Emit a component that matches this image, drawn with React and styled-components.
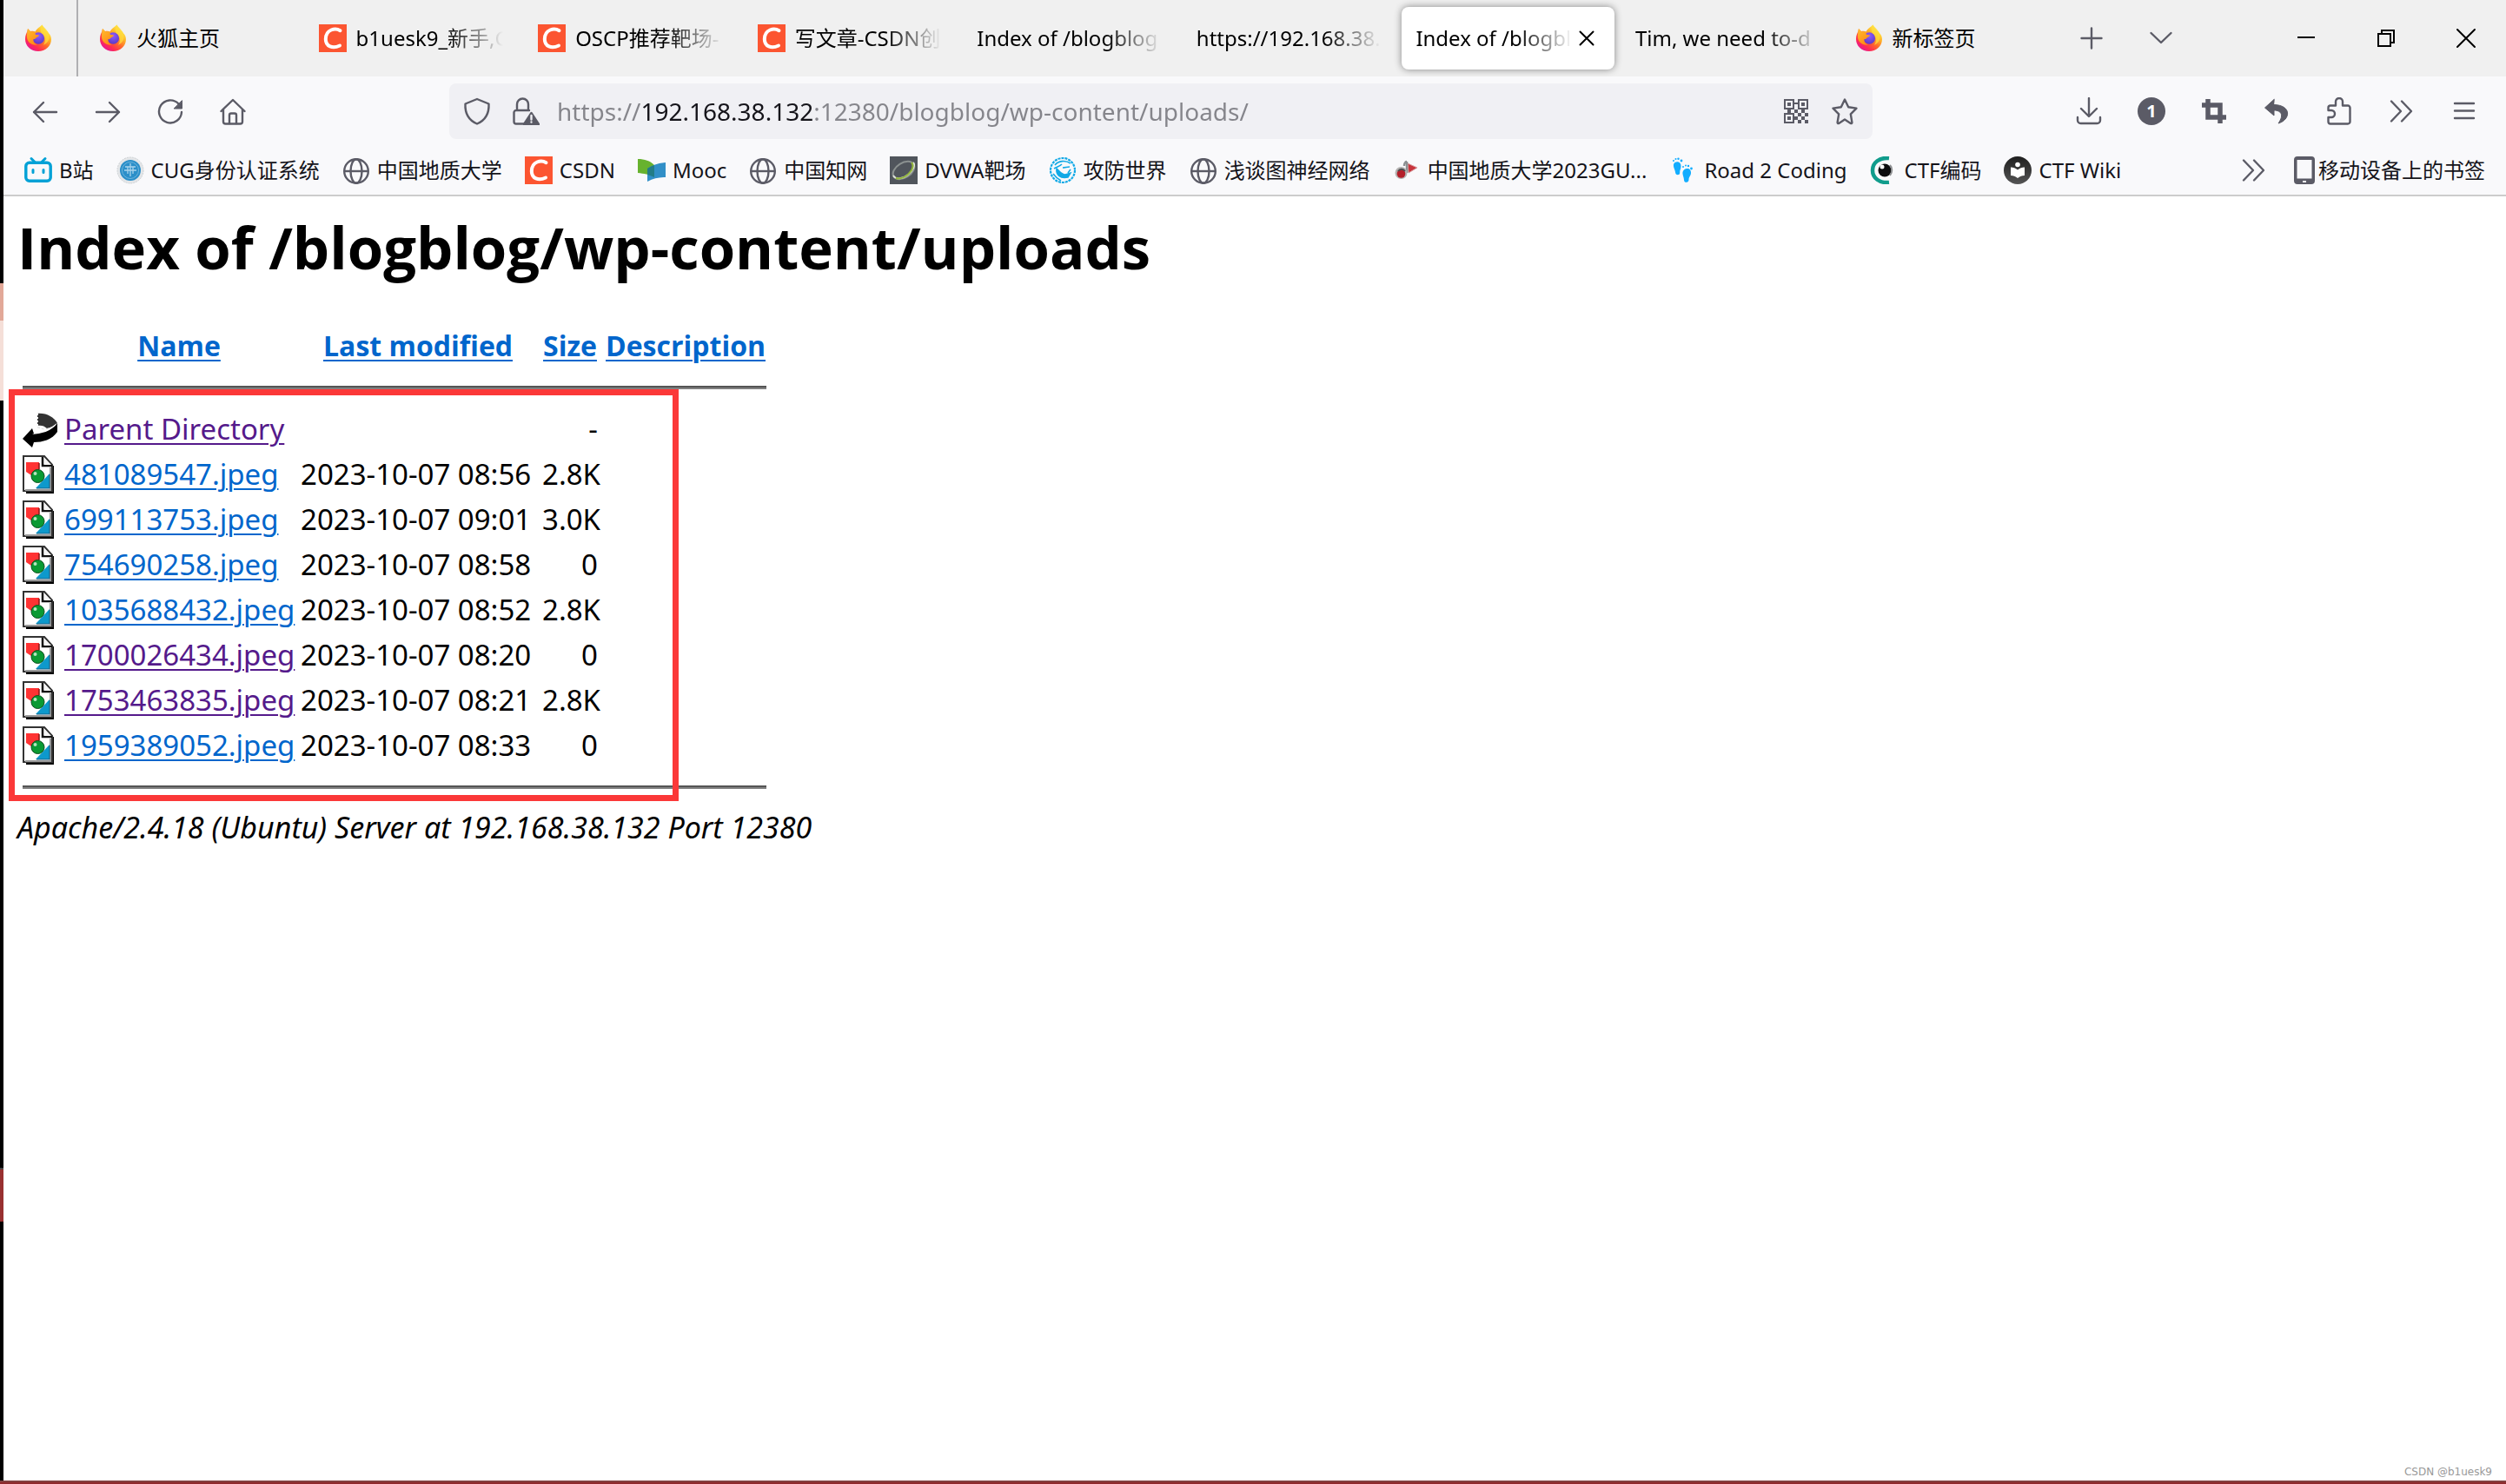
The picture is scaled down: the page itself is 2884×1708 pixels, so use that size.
import React from "react";
import styled, { createGlobalStyle } from "styled-components";

const Colors = {
  Chrome: "#f0f0f0",
  Toolbar: "#f9f9fb",
  Field: "#f0f0f4",
  Icon: "#5b5b66",
  Text: "#15141a",
  Link: "#0066cc",
  Visited: "#551a8b",
  Mark: "#fb3838",
  White: "#ffffff",
};

const GlobalStyle = createGlobalStyle`
  * {
    box-sizing: border-box;
  }
  body {
    margin: 0;
    font-family: "Noto Sans", "Noto Sans CJK SC", sans-serif;
    font-size: 24px;
    color: ${Colors.Text};
  }
  button {
    font: inherit;
    color: inherit;
    background: none;
    border: 0;
    padding: 0;
  }
  svg {
    display: block;
    flex: none;
  }
`;

/* a sliver of the wallpaper shows on the left and at the bottom */
const Desktop = styled.div`
  min-height: 100vh;
  display: flex;
  padding: 0 0 4px 4px;
  background:
    linear-gradient(#82403f 50%, #8f2a2d 50%) bottom / 100% 4px no-repeat,
    linear-gradient(
      #000 326px,
      #e2a898 326px 369px,
      #f5dfd8 369px 461px,
      #000 461px 1344px,
      #444 1344px 1346px,
      #983030 1346px 1406px,
      #000 1406px
    );
`;

const Window = styled.div`
  flex: 1;
  min-width: 0;
  display: flex;
  flex-direction: column;
  background: ${Colors.White};
`;

const TabBar = styled.header`
  display: flex;
  height: 88px;
  background: ${Colors.Chrome};
  color: #000;
`;

const PinnedTab = styled.button`
  width: 86px;
  flex: none;
  display: flex;
  align-items: center;
  padding-left: 24px;
  border-right: 2px solid #b0b0b2;
`;

const TabList = styled.div`
  flex: 0 1 2277px;
  min-width: 0;
  display: flex;
  gap: 8px;
  padding: 8px 4px 8px 8px;
`;

const TabItem = styled.div`
  flex: 1 1 0;
  min-width: 0;
  display: flex;
  align-items: center;
  padding: 0 16px;
  border-radius: 8px;
  background: ${(p) => (p.$active ? Colors.White : "transparent")};
  box-shadow: ${(p) => (p.$active ? "0 0 8px rgba(0, 0, 0, 0.45)" : "none")};
`;

const TabButton = styled.button`
  flex: 1;
  min-width: 0;
  display: flex;
  align-items: center;
  gap: 11px;
  text-align: left;
`;

const TabLabel = styled.span`
  flex: 1;
  min-width: 0;
  overflow: hidden;
  white-space: nowrap;
  line-height: 36px;
  mask-image: ${(p) =>
    p.$fade ? "linear-gradient(to left, transparent, #000 64px)" : "none"};
`;

const CloseTab = styled.button`
  width: 32px;
  height: 32px;
  display: flex;
  align-items: center;
  justify-content: center;
`;

const BarButton = styled.button`
  width: ${(p) => (p.$wide ? 92 : p.$tab ? 80 : 72)}px;
  flex: none;
  display: flex;
  align-items: center;
  justify-content: center;
  color: ${(p) => (p.$wide ? "#000" : Colors.Icon)};
`;

const Spacer = styled.div`
  flex: 1;
`;

const Toolbar = styled.nav`
  display: flex;
  height: 80px;
  padding: 8px 12px;
  background: ${Colors.Toolbar};
`;

const UrlBar = styled.form`
  flex: 0 1 1638px;
  min-width: 0;
  display: flex;
  align-items: center;
  padding: 0 16px;
  border-radius: 8px;
  background: ${Colors.Field};
  color: ${Colors.Icon};
`;

const UrlIcons = styled.div`
  display: flex;
  gap: 24px;
`;

/* the host part is painted darker than the rest of the address */
const UrlInput = styled.input`
  flex: 1;
  min-width: 0;
  margin: 0 20px;
  padding: 0;
  border: 0;
  outline: 0;
  font: inherit;
  font-size: 28px;
  line-height: 40px;
  color: #85858b;
  background: linear-gradient(
    to right,
    #85858b 98px,
    ${Colors.Text} 98px 295px,
    #85858b 295px
  );
  background-clip: text;
  -webkit-text-fill-color: transparent;
`;

const Badge = styled.span`
  width: 32px;
  height: 32px;
  border-radius: 50%;
  background: ${Colors.Icon};
  color: ${Colors.White};
  font-size: 20px;
  font-weight: 700;
  line-height: 32px;
  text-align: center;
`;

const Bookmarks = styled.nav`
  display: flex;
  align-items: center;
  gap: 26px;
  height: 58px;
  padding: 0 24px;
  background: ${Colors.Toolbar};
  border-bottom: 2px solid #cccccc;
`;

const Bookmark = styled.a`
  display: flex;
  align-items: center;
  gap: ${(p) => (p.$tight ? 0 : 8)}px;
  color: ${Colors.Text};
  text-decoration: none;
  white-space: nowrap;
  line-height: 36px;
`;

const More = styled.button`
  display: flex;
  color: ${Colors.Icon};
`;

const Page = styled.main`
  flex: 1;
  display: flex;
  flex-direction: column;
  align-items: flex-start;
  padding: 16px 16px 0;
  color: #000;
  font-size: 33px;
  line-height: 44px;
`;

const Title = styled.h1`
  margin: 0 0 44px;
  font-family: "Open Sans", sans-serif;
  font-size: 67px;
  line-height: 84px;
`;

const Listing = styled.div`
  position: relative;
`;

const MarkBox = styled.div`
  position: absolute;
  top: 78px;
  left: -10px;
  right: 107px;
  bottom: 8px;
  border: 7px solid ${Colors.Mark};
  pointer-events: none;
`;

const Table = styled.table`
  table-layout: fixed;
  width: 868px;
  border-collapse: separate;
  border-spacing: 4px;
  white-space: nowrap;

  th,
  td {
    padding: 2px;
    height: 48px;
  }
`;

const HeadCell = styled.th`
  font-family: "Open Sans", sans-serif;
  font-size: 32px;
`;

const Col = styled.col`
  width: ${(p) => p.$w}px;
`;

const SizeCell = styled.td`
  text-align: right;
`;

const RuleCell = styled.td`
  && {
    height: 40px;
  }
`;

const Rule = styled.hr`
  margin: 16px 0;
  border: 0;
  border-top: 2px solid #555555;
  border-bottom: 2px solid #808080;
`;

const Link = styled.a`
  color: ${(p) => (p.$visited ? Colors.Visited : Colors.Link)};
  text-decoration: underline;
  text-decoration-thickness: 2px;
  text-underline-offset: 4px;
`;

const Address = styled.address`
  font-size: 34px;
  font-style: italic;
`;

const Watermark = styled.small`
  margin-top: auto;
  align-self: flex-end;
  font-family: "DejaVu Sans", sans-serif;
  font-size: 12px;
  line-height: 20px;
  color: #999999;
`;

/* ---- icons ---- */

const Icon = ({ children, size = 32, width = 2.4 }) => (
  <svg
    width={size}
    height={size}
    viewBox="0 0 32 32"
    fill="none"
    stroke="currentColor"
    strokeWidth={width}
    strokeLinecap="round"
    strokeLinejoin="round"
    aria-hidden="true"
  >
    {children}
  </svg>
);

const Firefox = () => (
  <svg width="32" height="32" viewBox="0 0 32 32" aria-hidden="true">
    <defs>
      <linearGradient id="fxBody" x1="0.85" y1="0.1" x2="0.2" y2="0.95">
        <stop offset="0" stopColor="#fff44f" />
        <stop offset="0.3" stopColor="#ffb527" />
        <stop offset="0.55" stopColor="#ff6a2b" />
        <stop offset="0.8" stopColor="#ff2b52" />
        <stop offset="1" stopColor="#e3159b" />
      </linearGradient>
      <radialGradient id="fxGlobe" cx="0.5" cy="0.3" r="0.7">
        <stop offset="0" stopColor="#9059ff" />
        <stop offset="1" stopColor="#5b3bc4" />
      </radialGradient>
      <linearGradient id="fxHead" x1="0" y1="0" x2="0.6" y2="1">
        <stop offset="0" stopColor="#ffbd2e" />
        <stop offset="1" stopColor="#ff8a16" />
      </linearGradient>
    </defs>
    <path
      d="M20.5 0.5c1 3 3 4 5.500 7.500 1-.2 1.400 1 1.600 1.800C30 12 31 14.500 31 17.300 31 25 24.300 31 16 31S1 25 1 17c0-4.500 1.500-7 2.300-8.500L4 5l3 3.200C9 7.500 11 7.800 12.500 8.500 14 5 17.500 3.500 20.500.5z"
      fill="url(#fxBody)"
    />
    <circle cx="16.300" cy="16" r="6.800" fill="url(#fxGlobe)" />
    <path
      d="M4 5l3.500 3.500c2-.6 4-.3 5.500.8-.8 1-.8 2.200.5 2.700l3.500.4c0 1.600-2.500 2-3.500 3.100-.6 1.300-1.600 1.500-3 1.500-.6 3 1.500 5.600 4.500 6.500C8 24.500 3 20 3 14.500 3 11 3.300 8 4 5z"
      fill="url(#fxHead)"
    />
    <path
      d="M20.500.5c1 3 7.500 5.500 8 13.500.2 4-2 8-6.500 9.800 3-4 2.500-9.300-.7-12.300C18 9 18 4 20.500.5z"
      fill="#ffdc3e"
      opacity="0.75"
    />
  </svg>
);

const CsdnLogo = () => (
  <svg width="32" height="32" viewBox="0 0 32 32" aria-hidden="true">
    <rect width="32" height="32" fill="#fc5531" />
    <path
      d="M24.500 7.200C19 3.800 8 5.500 7.800 17c0 8.500 8 11.500 16.200 7.500"
      fill="none"
      stroke="#fff"
      strokeWidth="4"
      strokeLinecap="round"
    />
  </svg>
);

const Bilibili = () => (
  <svg width="32" height="32" viewBox="0 0 32 32" fill="none" stroke="#00a1d6" aria-hidden="true">
    <path d="M8 2.500l4 4M24 2.500l-4 4" strokeWidth="3" strokeLinecap="round" />
    <rect x="1.800" y="7.200" width="28.400" height="21" rx="4" strokeWidth="3.400" />
    <path d="M10 15.500v3M22 15.500v3" strokeWidth="3" strokeLinecap="round" />
  </svg>
);

const Seal = () => (
  <svg width="32" height="32" viewBox="0 0 32 32" fill="none" aria-hidden="true">
    <circle cx="16" cy="16" r="15" fill="#e4e6e8" stroke="#cdd1d4" strokeDasharray="2 1" />
    <circle cx="16" cy="16" r="12" fill="#2b8fc9" />
    <circle cx="16" cy="16" r="9.500" stroke="#6fb4dc" />
    <path d="M10 12h12M9 16h14M16 8v15M13 12v8M19 12v8" stroke="#a9d3eb" strokeWidth="1.300" />
  </svg>
);

const Globe = () => (
  <svg width="32" height="32" viewBox="0 0 32 32" fill="none" stroke={Colors.Icon} strokeWidth="2.400" aria-hidden="true">
    <circle cx="16" cy="17" r="13.800" />
    <ellipse cx="16" cy="17" rx="6.500" ry="13.800" />
    <path d="M2.500 17h27" />
  </svg>
);

const MoocLogo = () => (
  <svg width="32" height="32" viewBox="0 0 32 32" aria-hidden="true">
    <path d="M0 3c8 0 14 2 19 7v14c-6-4-12-4-19-5z" fill="#67b22e" />
    <path d="M32 7v17c-8 0-14 1.500-21 5V14c6-4 13-6.500 21-7z" fill="#318fc7" />
    <path d="M11 14c3-2 5-3 8-4v14c-2-1-5-2-8-3z" fill="#227c86" />
  </svg>
);

const DvwaLogo = () => (
  <svg width="32" height="32" viewBox="0 0 32 32" fill="none" aria-hidden="true">
    <rect width="32" height="32" fill="#50555c" />
    <ellipse cx="16" cy="16" rx="13.500" ry="8.500" transform="rotate(-32 16 16)" stroke="#8b9190" strokeWidth="2" />
    <path d="M4 22c3 5 11 4 17-1s9-11 6-14" stroke="#dfe5da" strokeWidth="1.800" />
    <path d="M7 25c7 2 14-3 18-9 2-4 2-7 0-9" stroke="#93b63a" strokeWidth="2" />
  </svg>
);

const RangeLogo = () => (
  <svg width="32" height="32" viewBox="0 0 32 32" fill="none" stroke="#12a9e6" aria-hidden="true">
    <circle cx="16" cy="16" r="14" strokeWidth="2.200" strokeDasharray="3 1" />
    <path d="M7 10c4-5 12-6 18-2M6 14c3-2 6-2 9-5M24 12c-3 0-5 1-8 1" strokeWidth="1.600" />
    <path d="M9 14c-1 7 4 12 13 10l3-5-6 2c-4 0-6-3-10-7z" fill="#12a9e6" strokeWidth="1.500" />
    <path d="M5 20c3 4 5 6 9 8M25 15l-3 4" strokeWidth="1.600" />
  </svg>
);

const CupLogo = () => (
  <svg width="32" height="32" viewBox="0 0 32 32" fill="none" aria-hidden="true">
    <path d="M17 8l11 5-10 6z" fill="#c8343c" stroke="#d9a0a2" />
    <path d="M16 6v13M16 6c-2 0-3 3-3 5" stroke="#8c8f91" strokeWidth="2.500" />
    <circle cx="9.500" cy="19" r="7" fill="#b3b1b0" />
    <circle cx="9.500" cy="20" r="4.800" fill="#b41f2a" />
    <path d="M6 17c2-3 6-3 8 0" stroke="#4b4b4d" strokeWidth="1.800" />
  </svg>
);

const Feet = () => (
  <svg width="32" height="32" viewBox="0 0 32 32" fill="#12adff" aria-hidden="true">
    <path d="M6.500 7c3.500-2 7.500 0 7 5-.3 3-1.500 4-1.300 7 0 3-4.700 3-5 0-.3-4-4.500-9-.7-12z" />
    <path d="M17 15.500c4-3 8.500-1 8 4-.3 3-2.500 4-2.500 7.500 0 3.500-5.500 4-5.500 0 0-4-3.500-8 0-11.500z" />
    <circle cx="5" cy="5" r="1" />
    <circle cx="7.500" cy="3" r="1" />
    <circle cx="10.500" cy="2.800" r="1.200" />
    <circle cx="14" cy="5" r="1.400" />
    <circle cx="16" cy="12" r="1" />
    <circle cx="19" cy="10.500" r="1" />
    <circle cx="22" cy="11" r="1.200" />
    <circle cx="25.500" cy="14" r="1.400" />
  </svg>
);

const EyeLogo = () => (
  <svg width="32" height="32" viewBox="0 0 32 32" fill="none" aria-hidden="true">
    <path d="M22 2C11 1 3 7 3 16s8 15 19 14" stroke="#109c8c" strokeWidth="4.500" />
    <circle cx="17" cy="16" r="7.500" fill="#0c0c0e" />
    <circle cx="14" cy="12" r="2.500" fill="#fff" />
    <path d="M23 10c3 3 3 8 0 12" stroke="#8e9092" strokeWidth="2" />
  </svg>
);

const WikiLogo = () => (
  <svg width="32" height="32" viewBox="0 0 32 32" aria-hidden="true">
    <defs>
      <linearGradient id="wikiBg" x1="0" y1="0" x2="0" y2="1">
        <stop offset="0" stopColor="#1e1e1e" />
        <stop offset="1" stopColor="#555" />
      </linearGradient>
    </defs>
    <circle cx="16" cy="16" r="16" fill="url(#wikiBg)" />
    <circle cx="16" cy="9.500" r="2.800" fill="#fff" />
    <path d="M16 15.500c-2.400-2-5-3-8-3v9.500c3 0 5.500 1 8 3 2.500-2 5-3 8-3v-9.500c-3 0-5.600 1-8 3z" fill="#fff" />
  </svg>
);

const Phone = () => (
  <svg width="32" height="32" viewBox="0 0 32 32" aria-hidden="true">
    <path
      d="M8 0h16a4 4 0 0 1 4 4v24a4 4 0 0 1-4 4H8a4 4 0 0 1-4-4V4a4 4 0 0 1 4-4zM7.500 4v21.500h17V4zM14 28v2h4v-2z"
      fill={Colors.Icon}
      fillRule="evenodd"
    />
  </svg>
);

const Chevrons = () => (
  <Icon>
    <path d="M4 4.500l11 11.500L4 27.500M16 4.500L27 16 16 27.500" />
  </Icon>
);

const QrIcon = () => (
  <svg width="32" height="32" viewBox="0 0 32 32" fill={Colors.Icon} aria-hidden="true">
    <path
      fillRule="evenodd"
      d="M2 2h12v12H2zM4 4v8h8V4zM6 6h4v4H6zM18 2h12v12H18zM20 4v8h8V4zM22 6h4v4h-4zM2 18h12v12H2zM4 20v8h8v-8zM6 22h4v4H6z"
    />
    <path d="M14 6h4v2h-4zM6 14h4v4H6zM14 14h4v4h-4zM18 18h4v4h-4zM22 14h4v4h-4zM26 18h4v4h-4zM14 22h4v4h-4zM22 22h4v4h-4zM18 26h4v4h-4zM26 26h4v4h-4z" />
  </svg>
);

const BackFolder = () => (
  <svg width="40" height="44" viewBox="0 0 40 44" aria-hidden="true">
    <path d="M17 4c10-1 19 4 23 11-4 2-6 5-12 6-3-3-7-4-11-3z" fill="#333" />
    <path d="M17 4v15" stroke="#fff" strokeWidth="2" strokeDasharray="2 2" />
    <path d="M11 28c10-1 22-3 29-13v10c-6 9-17 12-27 12l-2 6L0 33l11-12 2 6z" fill="#000" />
    <path d="M17 20c3 0 5 2 9 2 5-1 10-3 13-6" fill="none" stroke="#ddd" strokeDasharray="3 2" />
  </svg>
);

const ImageFile = () => (
  <svg width="40" height="44" viewBox="0 0 40 44" aria-hidden="true">
    <path d="M4 43h31V12" fill="none" stroke="#000" strokeWidth="2" />
    <path d="M1 1h24l9 10v30H1z" fill="#fff" stroke="#333" strokeWidth="2" />
    <path d="M32 14v26H3" fill="none" stroke="#999" strokeWidth="2" />
    <path d="M23 2v10h11" fill="none" stroke="#111" strokeWidth="2.500" />
    <path d="M25 3l8 8h-8z" fill="#f4f4f4" />
    <path d="M4 8h15v10l-6 7-9-6z" fill="#ff3333" />
    <path d="M19 9v7" stroke="#8b1414" strokeWidth="1.500" />
    <path d="M31 21v17H15z" fill="#0d99cc" />
    <path d="M31 22v16H16" fill="none" stroke="#145f86" />
    <circle cx="17.500" cy="24" r="7.500" fill="#0a9a33" stroke="#0a4d1d" />
    <circle cx="14.500" cy="21" r="2" fill="#b5e5c0" />
  </svg>
);

/* ---- data ---- */

const tabs = [
  { title: "火狐主页", icon: Firefox },
  { title: "b1uesk9_新手,C", icon: CsdnLogo, fade: true },
  { title: "OSCP推荐靶场-", icon: CsdnLogo, fade: true },
  { title: "写文章-CSDN创", icon: CsdnLogo, fade: true },
  { title: "Index of /blogblog", fade: true },
  { title: "https://192.168.38.", fade: true },
  { title: "Index of /blogbl", fade: true, active: true },
  { title: "Tim, we need to-d", fade: true },
  { title: "新标签页", icon: Firefox },
];

const bookmarks = [
  { title: "B站", icon: Bilibili },
  { title: "CUG身份认证系统", icon: Seal },
  { title: "中国地质大学", icon: Globe },
  { title: "CSDN", icon: CsdnLogo },
  { title: "Mooc", icon: MoocLogo },
  { title: "中国知网", icon: Globe },
  { title: "DVWA靶场", icon: DvwaLogo },
  { title: "攻防世界", icon: RangeLogo },
  { title: "浅谈图神经网络", icon: Globe },
  { title: "中国地质大学2023GU...", icon: CupLogo },
  { title: "Road 2 Coding", icon: Feet },
  { title: "CTF编码", icon: EyeLogo },
  { title: "CTF Wiki", icon: WikiLogo },
];

const files = [
  { name: "481089547.jpeg", date: "2023-10-07 08:56", size: "2.8K" },
  { name: "699113753.jpeg", date: "2023-10-07 09:01", size: "3.0K" },
  { name: "754690258.jpeg", date: "2023-10-07 08:58", size: "0" },
  { name: "1035688432.jpeg", date: "2023-10-07 08:52", size: "2.8K" },
  { name: "1700026434.jpeg", date: "2023-10-07 08:20", size: "0", visited: true },
  { name: "1753463835.jpeg", date: "2023-10-07 08:21", size: "2.8K", visited: true },
  { name: "1959389052.jpeg", date: "2023-10-07 08:33", size: "0" },
];

function Tabs() {
  return (
    <TabBar>
      <PinnedTab aria-label="Firefox">
        <Firefox />
      </PinnedTab>
      <TabList>
        {tabs.map((tab, i) => (
          <TabItem key={i} $active={tab.active}>
            <TabButton aria-current={tab.active ? "page" : undefined}>
              {tab.icon && <tab.icon />}
              <TabLabel $fade={tab.fade}>{tab.title}</TabLabel>
            </TabButton>
            {tab.active && (
              <CloseTab aria-label="Close tab">
                <Icon>
                  <path d="M8.500 8.500l15 15M23.500 8.500l-15 15" strokeWidth="2" stroke="#000" />
                </Icon>
              </CloseTab>
            )}
          </TabItem>
        ))}
      </TabList>
      <BarButton $tab aria-label="New tab">
        <Icon>
          <path d="M16 4.500v23M4.500 16h23" />
        </Icon>
      </BarButton>
      <BarButton $tab aria-label="List all tabs">
        <Icon>
          <path d="M4.500 10L16 21 27.500 10" />
        </Icon>
      </BarButton>
      <Spacer />
      <BarButton $wide aria-label="Minimize">
        <Icon>
          <path d="M6 15h20" strokeWidth="2" strokeLinecap="butt" />
        </Icon>
      </BarButton>
      <BarButton $wide aria-label="Restore">
        <Icon>
          <path d="M7 11h14v14H7zM11 11V7h14v14h-4" strokeWidth="2" strokeLinejoin="miter" />
        </Icon>
      </BarButton>
      <BarButton $wide aria-label="Close">
        <Icon>
          <path d="M6 6l20 20M26 6L6 26" strokeWidth="2" />
        </Icon>
      </BarButton>
    </TabBar>
  );
}

function Navigation() {
  return (
    <Toolbar aria-label="Navigation">
      <BarButton aria-label="Back">
        <Icon>
          <path d="M29 17H3M14 6L3 17l11 11" />
        </Icon>
      </BarButton>
      <BarButton aria-label="Forward">
        <Icon>
          <path d="M3 17h26M18 6l11 11-11 11" />
        </Icon>
      </BarButton>
      <BarButton aria-label="Reload">
        <Icon>
          <path d="M29 17a13 13 0 1 1-3.500-9.500" />
          <path d="M29.500 4v9h-9z" fill="currentColor" strokeWidth="1" />
        </Icon>
      </BarButton>
      <BarButton aria-label="Home">
        <Icon>
          <path d="M2.500 16L16 3l13.500 13M5 14v14a2.500 2.500 0 0 0 2.500 2.500h17A2.500 2.500 0 0 0 27 28V14" />
          <path d="M12 30v-9.500a2 2 0 0 1 2-2h4a2 2 0 0 1 2 2V30" />
        </Icon>
      </BarButton>
      <Spacer />
      <UrlBar onSubmit={(e) => e.preventDefault()}>
        <UrlIcons>
          <Icon>
            <path d="M16 2l13.500 5.500c.5 10-3 18.500-13.500 23C5.500 26 2 17.500 2.500 7.500z" />
          </Icon>
          <Icon>
            <path d="M6 15V8a6 6 0 0 1 13 0v7M14 30.500H5A2.500 2.500 0 0 1 2.500 28V17.500A2.500 2.500 0 0 1 5 15h15" />
            <path d="M22.500 18L31 31H14z" fill="currentColor" />
            <path d="M22.500 21v4.500M22.500 28.500v.1" stroke={Colors.Field} />
          </Icon>
        </UrlIcons>
        <UrlInput
          aria-label="Address"
          defaultValue="https://192.168.38.132:12380/blogblog/wp-content/uploads/"
        />
        <UrlIcons>
          <QrIcon />
          <Icon>
            <path d="M16 2.500l4.200 8.700 9.300 1.400-6.700 6.700 1.600 9.600c.1 1-.7 1.500-1.600 1L16 25.500l-6.800 4.400c-.9.500-1.700 0-1.600-1l1.600-9.600-6.700-6.700 9.300-1.400z" />
          </Icon>
        </UrlIcons>
      </UrlBar>
      <Spacer />
      <BarButton aria-label="Downloads">
        <Icon>
          <path d="M16 1v20M7 13l9 9 9-9M3 23v3.500A3.500 3.500 0 0 0 6.500 30h19a3.500 3.500 0 0 0 3.500-3.500V23" />
        </Icon>
      </BarButton>
      <BarButton aria-label="Notifications">
        <Badge>1</Badge>
      </BarButton>
      <BarButton aria-label="Screenshot">
        <Icon>
          <path d="M9 2v21h21M2 9h21v21" strokeWidth="5.500" strokeLinecap="butt" strokeLinejoin="miter" />
        </Icon>
      </BarButton>
      <BarButton aria-label="Undo">
        <Icon>
          <path
            d="M13 2.500L2.500 12 13 21v-6c8 0 12 5 5 15 14-4 16-21-5-21.500z"
            fill="currentColor"
            strokeWidth="1"
          />
        </Icon>
      </BarButton>
      <BarButton aria-label="Extensions">
        <Icon>
          <path d="M6 9.500h6V5a4 4 0 0 1 8 0v4.500h6a2.500 2.500 0 0 1 2.500 2.500v16a2.500 2.500 0 0 1-2.500 2.500H6A2.500 2.500 0 0 1 3.500 28v-5H7a4 4 0 0 0 0-8H3.500v-3A2.500 2.500 0 0 1 6 9.500z" />
        </Icon>
      </BarButton>
      <BarButton aria-label="More tools">
        <Chevrons />
      </BarButton>
      <BarButton aria-label="Menu">
        <Icon>
          <path d="M5 7h22M5 15.500h22M5 24h22" />
        </Icon>
      </BarButton>
    </Toolbar>
  );
}

function BookmarkBar() {
  return (
    <Bookmarks aria-label="Bookmarks">
      {bookmarks.map((item) => (
        <Bookmark href="#" key={item.title}>
          <item.icon />
          {item.title}
        </Bookmark>
      ))}
      <Spacer />
      <More aria-label="More bookmarks">
        <Chevrons />
      </More>
      <Bookmark href="#" $tight>
        <Phone />
        移动设备上的书签
      </Bookmark>
    </Bookmarks>
  );
}

function RuleRow() {
  return (
    <tr>
      <RuleCell colSpan={5}>
        <Rule />
      </RuleCell>
    </tr>
  );
}

function DirectoryIndex() {
  return (
    <Page>
      <Title>Index of /blogblog/wp-content/uploads</Title>
      <Listing>
        <Table>
          <colgroup>
            <Col $w={44} />
            <Col $w={268} />
            <Col $w={274} />
            <Col $w={68} />
            <Col $w={190} />
          </colgroup>
          <thead>
            <tr>
              <td />
              <HeadCell scope="col"><Link href="#">Name</Link></HeadCell>
              <HeadCell scope="col"><Link href="#">Last modified</Link></HeadCell>
              <HeadCell scope="col"><Link href="#">Size</Link></HeadCell>
              <HeadCell scope="col"><Link href="#">Description</Link></HeadCell>
            </tr>
          </thead>
          <tbody>
            <RuleRow />
            <tr>
              <td><BackFolder /></td>
              <td><Link href="#" $visited>Parent Directory</Link></td>
              <td />
              <SizeCell>-</SizeCell>
              <td />
            </tr>
            {files.map((file) => (
              <tr key={file.name}>
                <td><ImageFile /></td>
                <td><Link href="#" $visited={file.visited}>{file.name}</Link></td>
                <td>{file.date}</td>
                <SizeCell>{file.size}</SizeCell>
                <td />
              </tr>
            ))}
            <RuleRow />
          </tbody>
        </Table>
        <MarkBox />
      </Listing>
      <Address>Apache/2.4.18 (Ubuntu) Server at 192.168.38.132 Port 12380</Address>
      <Watermark>CSDN @b1uesk9</Watermark>
    </Page>
  );
}

export default function App() {
  return (
    <>
      <GlobalStyle />
      <Desktop>
        <Window>
          <Tabs />
          <Navigation />
          <BookmarkBar />
          <DirectoryIndex />
        </Window>
      </Desktop>
    </>
  );
}
